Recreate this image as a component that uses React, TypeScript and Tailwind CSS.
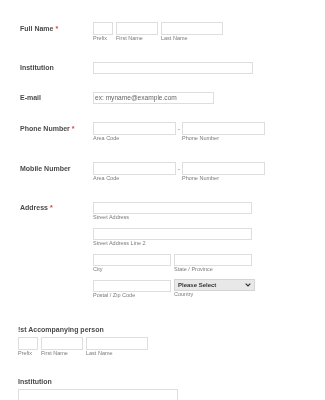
import React from 'react';

const Box = ({ w, h = 13 }: { w: number; h?: number }) => (
  <div className="border border-[#dedede]" style={{ width: w, height: h }} />
);

const Field = ({ w, sub, h = 13 }: { w: number; sub: string; h?: number }) => (
  <div className="flex flex-col">
    <Box w={w} h={h} />
    <div className="text-[5.5px] leading-[7px] text-[#7a7a7a]">{sub}</div>
  </div>
);

const Label = ({ text, req }: { text: string; req?: boolean }) => (
  <div className="w-[73px] shrink-0 text-[7px] leading-[13px] font-bold text-[#4a4a4a]">
    {text}
    {req && <span className="text-[#e23b3b] ml-[2px]">*</span>}
  </div>
);

const Dash = () => (
  <div className="w-[6px] text-center text-[7px] leading-[13px] text-[#777]">-</div>
);

export default function App() {
  return (
    <div className="w-[325px] h-[400px] overflow-hidden antialiased [will-change:transform] font-['Liberation_Sans',Arial,sans-serif]">
      <div className="pl-[20px] pt-[22px]">
        <div className="flex">
          <Label text="Full Name" req />
          <div className="flex gap-[3px]">
            <Field w={20} sub="Prefix" />
            <Field w={42} sub="First Name" />
            <Field w={62} sub="Last Name" />
          </div>
        </div>

        <div className="flex mt-[20px]">
          <div className="w-[73px] shrink-0 text-[7px] leading-[12px] font-bold text-[#4a4a4a]">Institution</div>
          <Box w={160} h={12} />
        </div>

        <div className="flex mt-[18px]">
          <div className="w-[73px] shrink-0 text-[7px] leading-[12px] font-bold text-[#4a4a4a]">E-mail</div>
          <div className="w-[121px] h-[12px] border border-[#dedede] pl-[1px] text-[6.6px] leading-[10px] text-[#666]">
            ex: myname@example.com
          </div>
        </div>

        <div className="flex mt-[18px]">
          <Label text="Phone Number" req />
          <div className="flex">
            <Field w={83} sub="Area Code" />
            <Dash />
            <Field w={83} sub="Phone Number" />
          </div>
        </div>

        <div className="flex mt-[20px]">
          <Label text="Mobile Number" />
          <div className="flex">
            <Field w={83} sub="Area Code" />
            <Dash />
            <Field w={83} sub="Phone Number" />
          </div>
        </div>

        <div className="flex mt-[20px]">
          <div className="w-[73px] shrink-0 text-[7px] leading-[11px] font-bold text-[#4a4a4a]">
            Address<span className="text-[#e23b3b] ml-[2px]">*</span>
          </div>
          <div className="flex flex-col gap-[7px]">
            <Field w={159} h={12} sub="Street Address" />
            <Field w={159} h={12} sub="Street Address Line 2" />
            <div className="flex gap-[3px]">
              <Field w={78} h={12} sub="City" />
              <Field w={78} h={12} sub="State / Province" />
            </div>
            <div className="flex gap-[3px]">
              <Field w={78} h={12} sub="Postal / Zip Code" />
              <div className="flex flex-col -mt-[1px]">
                <div className="w-[81px] h-[12px] border border-[#d4d4d4] bg-[#e8e8e8] flex items-center justify-between pl-[3px] pr-[3px]">
                  <span className="text-[6px] font-bold text-[#333]">Please Select</span>
                  <svg width="6" height="4" viewBox="0 0 6 4">
                    <path d="M0.7 0.7 L3 3 L5.3 0.7" fill="none" stroke="#333" strokeWidth="1.2" />
                  </svg>
                </div>
                <div className="text-[5.5px] leading-[7px] text-[#7a7a7a]">Country</div>
              </div>
            </div>
          </div>
        </div>
      </div>

      <div className="pl-[18px] mt-[26px]">
        <div className="text-[7px] leading-[9px] font-bold text-[#4a4a4a]">!st Accompanying person</div>
        <div className="flex gap-[3px] mt-[3px]">
          <Field w={20} sub="Prefix" />
          <Field w={42} sub="First Name" />
          <Field w={62} sub="Last Name" />
        </div>
        <div className="text-[7px] leading-[9px] font-bold text-[#4a4a4a] mt-[20px]">Institution</div>
        <div className="mt-[3px]">
          <Box w={160} h={14} />
        </div>
      </div>
    </div>
  );
}
